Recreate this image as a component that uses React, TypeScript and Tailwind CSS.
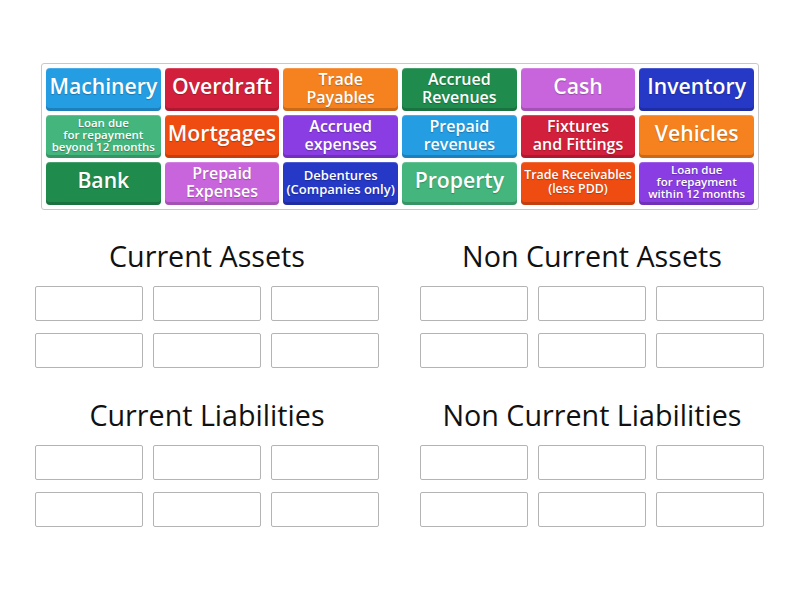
import React from "react";

type Tile = { lines: string[]; bg: string; size: string };

const BLUE = "bg-[#259de3]";
const RED = "bg-[#d2203c]";
const ORANGE = "bg-[#f5821f]";
const DGREEN = "bg-[#1f8c4d]";
const PINK = "bg-[#c965dc]";
const NAVY = "bg-[#2538c6]";
const MGREEN = "bg-[#44b57c]";
const RORANGE = "bg-[#ef4c12]";
const PURPLE = "bg-[#8a3de2]";

const BIG = "text-[21.2px] leading-[26px] pb-[8px]";
const MED = "text-[16px] leading-[18px] pb-[3px]";
const SMALL = "text-[11.5px] leading-[12px] pb-[3px]";
const DEB = "text-[13px] leading-[14px] pb-[3px]";
const TR = "text-[12.4px] leading-[14px] pb-[3px]";

const tiles: Tile[] = [
  { lines: ["Machinery"], bg: BLUE, size: BIG },
  { lines: ["Overdraft"], bg: RED, size: BIG },
  { lines: ["Trade", "Payables"], bg: ORANGE, size: MED },
  { lines: ["Accrued", "Revenues"], bg: DGREEN, size: MED },
  { lines: ["Cash"], bg: PINK, size: BIG },
  { lines: ["Inventory"], bg: NAVY, size: BIG },
  { lines: ["Loan due", "for repayment", "beyond 12 months"], bg: MGREEN, size: SMALL },
  { lines: ["Mortgages"], bg: RORANGE, size: BIG },
  { lines: ["Accrued", "expenses"], bg: PURPLE, size: MED },
  { lines: ["Prepaid", "revenues"], bg: BLUE, size: MED },
  { lines: ["Fixtures", "and Fittings"], bg: RED, size: MED },
  { lines: ["Vehicles"], bg: ORANGE, size: BIG },
  { lines: ["Bank"], bg: DGREEN, size: BIG },
  { lines: ["Prepaid", "Expenses"], bg: PINK, size: MED },
  { lines: ["Debentures", "(Companies only)"], bg: NAVY, size: DEB },
  { lines: ["Property"], bg: MGREEN, size: BIG },
  { lines: ["Trade Receivables", "(less PDD)"], bg: RORANGE, size: TR },
  { lines: ["Loan due", "for repayment", "within 12 months"], bg: PURPLE, size: SMALL },
];

function Section({ title }: { title: string }) {
  return (
    <div className="w-[344px] flex flex-col">
      <div className="h-[35px] pt-[3px] text-[28.7px] leading-[32px] text-center text-[#111]">{title}</div>
      <div className="mt-[14px] grid grid-cols-3 gap-x-[10px] gap-y-[12px]">
        {Array.from({ length: 6 }).map((_, i) => (
          <div key={i} className="h-[35px] border border-[#b4b4b4] rounded-[2px] bg-white" />
        ))}
      </div>
    </div>
  );
}

export default function App() {
  return (
    <div className="w-[800px] h-[600px] bg-white font-['Open_Sans',sans-serif] overflow-hidden">
      <div className="ml-[41px] mt-[63px] w-[718px] border border-[#c8c8c8] rounded-[3px] p-[4px]">
        <div className="grid grid-cols-6 gap-[4px]">
          {tiles.map((t, i) => (
            <div
              key={i}
              className={`${t.bg} h-[43px] rounded-[4px] flex flex-col items-center justify-center text-white font-semibold text-center whitespace-nowrap ${t.size} [text-shadow:0_1px_1px_rgba(0,0,0,0.25)] shadow-[inset_0_-3px_0_rgba(0,0,0,0.18),inset_0_1px_0_rgba(255,255,255,0.18)]`}
            >
              {t.lines.map((l, j) => (
                <span key={j}>{l}</span>
              ))}
            </div>
          ))}
        </div>
      </div>
      <div className="mt-[27px] pl-[35px] flex gap-x-[41px]">
        <Section title="Current Assets" />
        <Section title="Non Current Assets" />
      </div>
      <div className="mt-[28px] pl-[35px] flex gap-x-[41px]">
        <Section title="Current Liabilities" />
        <Section title="Non Current Liabilities" />
      </div>
    </div>
  );
}
